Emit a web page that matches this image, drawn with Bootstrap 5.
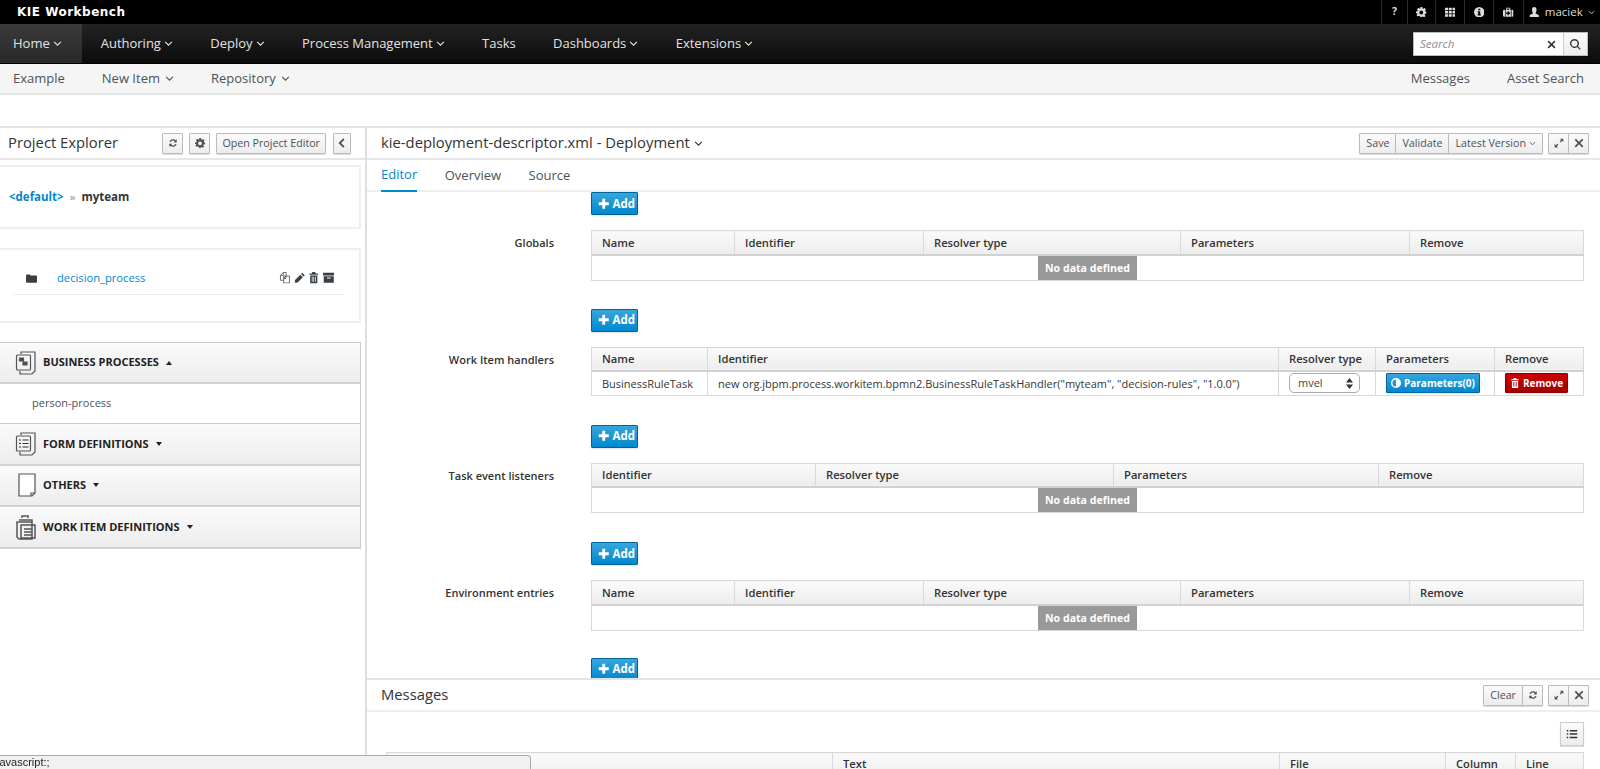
<!DOCTYPE html>
<html lang="en">
<head>
<meta charset="utf-8">
<title>KIE Workbench</title>
<link href="https://cdn.jsdelivr.net/npm/bootstrap@5.3.0/dist/css/bootstrap.min.css" rel="stylesheet">
<style>
html,body{height:769px;overflow:hidden}
body{font-family:"Open Sans","Noto Sans",sans-serif;font-size:12px;color:#363636;background:#fff}
svg.ic{width:1em;height:1em;fill:currentColor;flex:none;vertical-align:-.12em}
svg.ic.cv{font-size:9px}
svg.ic.cvs{font-size:7px}
.kie-top{height:24px;background:#000;color:#fff}
.kie-brand{font:700 12px "DejaVu Sans",sans-serif;padding-left:17px;letter-spacing:.5px}
.kie-util{height:24px;padding:0 8px;display:flex;align-items:center;justify-content:center;border-left:1px solid #2b2b2b;color:#ddd;font-size:10.500px}
.kie-user{font-size:11.500px;gap:5px}
.kie-user svg{font-size:10.500px}
.u26{width:26px}.u28{width:28px}.u29{width:29px}.u30{width:30px}.u77{width:77px}
.kie-main{height:40px;background:linear-gradient(#232323,#0c0c0c);border-bottom:1px solid #000;color:#ddd;font-size:13px}
.kie-main a{color:#e2e2e2;text-decoration:none;height:39px;display:flex;align-items:center;gap:3px;padding:0 18.700px}
.kie-main a.here{background:linear-gradient(#3a3a3a,#2a2a2a);padding:0 13px;width:82px}
.kie-search{width:175px;height:24px;background:#fff;border:1px solid #bbb;margin-right:12px;box-shadow:0 1px 1px rgba(0,0,0,.4);color:#333}
.kie-search em{color:#8b8d8f;font-size:11.500px;flex:1;padding-left:6px}
.kie-search b{width:24px;height:22px;display:flex;align-items:center;justify-content:center;font-size:9px}
.kie-search b+b{border-left:1px solid #ccc;background:linear-gradient(#fafafa,#ededed);font-size:11px}
.kie-sub{height:31px;background:#f5f5f5;border-bottom:2px solid #e3e3e3;font-size:13px;color:#4d5258;padding:0 16px 0 13px}
.kie-sub span{display:flex;align-items:center;gap:5px}
.kie-subgap{gap:37px}
.kie-gap{height:31px}
.kie-work{height:643px;border-top:2px solid #e3e3e3}
.kie-left{width:367px;flex:none;border-right:2px solid #dedede;height:100%}
.kie-right{flex:1;min-width:0;height:100%}
.kie-phead{height:32px;padding:0 14px 0 8px;border-bottom:2px solid #e7e7e7}
.kie-phead h2{font-size:14.800px;font-weight:400;margin:0;color:#333;white-space:nowrap}
.kie-rhead{padding:0 11px 0 14px}
.kie-hg6{gap:6px}.kie-hg5{gap:5px}
.kie-b{background:linear-gradient(#fafafa,#ededed);border:1px solid #bbb;border-radius:1px;color:#4d5258;font-size:10.700px;height:21px;padding:0 6px;display:inline-flex;align-items:center;gap:3px;box-shadow:0 1px 1px rgba(0,0,0,.15);line-height:1;white-space:nowrap}
.btn-group .kie-b+.kie-b{margin-left:-1px}
.kie-b.sq{width:21px;padding:0;justify-content:center;font-size:10px}
.kie-b.nar{width:18px}
.kie-b.me2{margin-right:1px;padding:0 5px}
.kie-box{width:361px;border:2px solid #eee;border-left:0}
.kie-crumb{height:64px;margin-top:5px;padding-left:9px;font-size:11.500px;font-weight:700;gap:6px}
.kie-crumb a,.kie-proj a{color:#0088ce;text-decoration:none}
.kie-crumb i{font-style:normal;font-weight:400;color:#8b8d8f}
.kie-proj{height:75px;margin-top:19px;padding:0 14px}
.kie-prow{height:45px;padding-top:12px;border-bottom:1px solid #eee;font-size:11.200px}
.kie-prow>svg{margin-left:12px;font-size:11px;color:#393f44}
.kie-prow a{margin-left:20px;flex:1}
.kie-tools{gap:3px;font-size:11.500px;color:#393f44;margin-right:11px}
.kie-acc{width:361px;margin-top:19px;border-top:1px solid #ccc}
.kie-ahead{height:41px;background:linear-gradient(#fafafa,#ededed);border-bottom:2px solid #d1d1d1;font-weight:700;font-size:11px;color:#222;padding-left:15px;gap:6px;border-right:1px solid #ccc}
.kie-acc>.kie-ahead+.kie-ahead,.kie-abody+.kie-ahead{height:41.500px}
.kie-ahead svg.doc{width:22px;height:26px;fill:none;stroke:#555;stroke-width:1.200;flex:none}
.kie-caret{width:0;height:0;border:3.500px solid transparent;border-top:4px solid #222;border-bottom:0;margin-left:1px}
.kie-caret.up{border-top:0;border-bottom:4px solid #222}
.kie-abody{height:40px;padding-left:32px;font-size:11px;color:#4d5258;border-bottom:1px solid #ccc;border-right:1px solid #ccc;display:flex;align-items:center}
.kie-tabs{height:32px;padding-left:14px;border-bottom:2px solid #eee;gap:27.500px;font-size:13px;color:#4d5258}
.kie-tabs span{display:flex;align-items:center;margin-bottom:-2px;height:32px}
.kie-tabs .on{color:#0088ce;border-bottom:2px solid #0088ce}
.kie-scroll{height:486px;overflow:hidden}
.kie-add{display:flex;margin-left:224px}
.kie-g27{margin-top:27px}.kie-g28{margin-top:28px}.kie-g29{margin-top:29px}
.kie-blue{background:linear-gradient(#39a5dc,#0088ce);border:1px solid #00659c;border-radius:1px;color:#fff;font-size:11.500px;font-weight:700;height:23px;padding:0 6px;display:inline-flex;align-items:center;gap:3px;box-shadow:0 1px 2px rgba(0,0,0,.12);white-space:nowrap}
.kie-blue.wide{width:47px}
.kie-blue.tiny{font-size:10px;height:20px;gap:3px;padding:0 4px}
.kie-blue.tiny svg{font-size:10px}
.kie-red{background:linear-gradient(#c00,#a30000);border-color:#8b0000}
.kie-row{display:flex;align-items:flex-start;margin:15px 0 0}
.kie-label{width:187px;flex:none;text-align:right;font-size:11px;font-weight:600;color:#333;padding-top:5px;margin-right:37px}
.kie-tb{width:992px;table-layout:fixed;margin:0;border:1px solid #d1d1d1;font-size:11px;color:#363636}
.kie-tb th{height:24px;padding:0 10px;background:linear-gradient(#fafafa,#ededed);border:1px solid #d9d9d9;border-bottom:2px solid #d1d1d1;font-size:11.200px;font-weight:600;color:#333;white-space:nowrap;vertical-align:middle;line-height:15px}
.kie-tb td{height:24px;padding:0 10px;border:1px solid #d9d9d9;vertical-align:middle;white-space:nowrap;box-shadow:none;background:#fff;line-height:15px}
.kie-tb td.kie-none{padding:0;text-align:center}
.kie-nodata{display:inline-block;background:#999;color:#fff;font-weight:700;font-size:10.600px;width:99px;line-height:24px;vertical-align:top}
.kie-sel{position:relative;width:71px;height:20px;border:1px solid #aaa;border-radius:5px;background:#fff;padding-left:8px;line-height:18px;color:#444}
.kie-sel svg{position:absolute;right:6px;top:4px;width:7px;height:11px;fill:#333}
.kie-msg{border-top:2px solid #e3e3e3}
.kie-mhead{height:32px;border-bottom:2px solid #eee}
.kie-mbody{padding:10px 16px 0 19px;height:70px;overflow:hidden}
.kie-list{width:24px;height:24px;background:linear-gradient(#fafafa,#ededed);border:1px solid #ccc;color:#333;font-size:12px;box-shadow:0 1px 1px rgba(0,0,0,.12);margin-left:auto;display:flex;align-items:center;justify-content:center}
.kie-mtb{width:1197px;table-layout:fixed;margin:6px 0 0;font-size:11.200px}
.kie-mtb th{height:25px;padding:3px 10px 0;background:linear-gradient(#fafafa,#ededed);border:1px solid #d9d9d9;font-weight:600;color:#333;vertical-align:top;line-height:15px}
.kie-status{position:fixed;left:0;bottom:0;width:531px;height:14px;background:#f1f1f1;border-top:1px solid #aaa;border-right:1px solid #aaa;border-top-right-radius:4px;font:11px/13px "Liberation Sans",sans-serif;color:#222;text-indent:-3px;overflow:hidden}
</style>
</head>
<body>
<svg width="0" height="0" class="position-absolute">
<defs>
<symbol id="i-x" viewBox="0 0 16 16"><path d="M3 1 8 6l5-5 2 2-5 5 5 5-2 2-5-5-5 5-2-2 5-5-5-5z"/></symbol>
<symbol id="i-ref" viewBox="0 0 16 16"><path d="M2.300 6.500A6 6 0 0 1 12.400 3.700L14 2v5H9l1.900-1.900A4 4 0 0 0 4.400 6.500zM13.700 9.500A6 6 0 0 1 3.600 12.300L2 14V9h5l-1.900 1.900a4 4 0 0 0 6.500-1.400z"/></symbol>
<symbol id="i-cog" viewBox="0 0 16 16"><path fill-rule="evenodd" d="M6.500 0h3l.4 2.200 1.300.6L13.100 1.500l2.100 2.100-1.300 1.900.6 1.300L16 7v3l-2.200.4-.6 1.300 1.300 1.900-2.100 2.100-1.900-1.300-1.300.6L9.500 16h-3l-.4-2.200-1.300-.6-1.900 1.300-2.100-2.100 1.300-1.900-.6-1.300L0 10V7l2.200-.4.6-1.300L1.500 3.400l2.100-2.100 1.900 1.300 1.300-.6zM8 5.500a3 3 0 1 0 0 6 3 3 0 0 0 0-6z"/></symbol>
<symbol id="i-th" viewBox="0 0 16 16"><path d="M0 1h4.500v4H0zM5.700 1h4.600v4H5.700zM11.500 1H16v4h-4.500zM0 6h4.500v4H0zM5.700 6h4.600v4H5.700zM11.500 6H16v4h-4.500zM0 11h4.500v4H0zM5.700 11h4.600v4H5.700zM11.500 11H16v4h-4.500z"/></symbol>
<symbol id="i-info" viewBox="0 0 16 16"><path fill-rule="evenodd" d="M8 0a8 8 0 1 1 0 16A8 8 0 0 1 8 0zM6.500 2.500v2.500h3V2.500zM5.500 6.500v1.500h1v3h-1V13h5v-1.500h-1v-5z"/></symbol>
<symbol id="i-kit" viewBox="0 0 16 16"><path fill-rule="evenodd" d="M5 1h6v3h1v11H4V4h1zM6.300 2.300V4h3.400V2.300zM7 6.500V8.500H5v2h2v2h2v-2h2v-2H9v-2zM0 6a2 2 0 0 1 2-2h1v11H2a2 2 0 0 1-2-2zM13 4h1a2 2 0 0 1 2 2v7a2 2 0 0 1-2 2h-1z"/></symbol>
<symbol id="i-user" viewBox="0 0 16 16"><path d="M8 0c2.200 0 3.500 1.800 3.500 4S10.300 8.500 10 9.500c0 1 5 1.700 5 3.800V16H1v-2.700c0-2.100 5-2.800 5-3.800C5.700 8.500 4.500 6.200 4.500 4S5.800 0 8 0z"/></symbol>
<symbol id="i-search" viewBox="0 0 16 16"><path fill-rule="evenodd" d="M6.500 0a6.500 6.500 0 0 1 5.200 10.400l4 4-1.400 1.400-4-4A6.500 6.500 0 1 1 6.500 0zm0 2a4.500 4.500 0 1 0 0 9 4.500 4.500 0 0 0 0-9z"/></symbol>
<symbol id="i-dn" viewBox="0 0 16 16"><path d="M2 5l6 6 6-6" fill="none" stroke="currentColor" stroke-width="2"/></symbol>
<symbol id="i-exp" viewBox="0 0 16 16"><path d="M9.500 1H15v5.500L13 4.500 10.500 7 9 5.500 11.500 3zM6.500 15H1V9.500l2 2L5.500 9 7 10.500 4.500 13z"/></symbol>
<symbol id="i-left" viewBox="0 0 16 16"><path d="M11 1.500 4.500 8l6.500 6.500" fill="none" stroke="currentColor" stroke-width="3"/></symbol>
<symbol id="i-files" viewBox="0 0 16 16"><path d="M10 5V.7H6L2 4.500v7h4.500M6 .7v4H2M6.500 5.500H14.500V15.300H6.500zM6.500 9l3.200-3.500V9z" fill="none" stroke="currentColor" stroke-width="1"/></symbol>
<symbol id="i-pen" viewBox="0 0 16 16"><path d="M11.500 1 15 4.500l-1.700 1.700-3.500-3.500zM8.800 3.700l3.500 3.500L5 14.500 1 15l.5-4z"/></symbol>
<symbol id="i-trash" viewBox="0 0 16 16"><path fill-rule="evenodd" d="M6 0h4l.7 2H14v1.700H2V2h3.300zM3 4.700h10V15l-1 1H4l-1-1zM5.300 6.500v7h1v-7zM7.500 6.500v7h1v-7zM9.700 6.500v7h1v-7z"/></symbol>
<symbol id="i-arch" viewBox="0 0 16 16"><path fill-rule="evenodd" d="M0 1h16v4H0zM1 6h14v9H1zM5.500 7.500V9h5V7.500z"/></symbol>
<symbol id="i-fold" viewBox="0 0 16 16"><path d="M0 3.500 1 2h4.500l1 1.500H15l1 1V13l-1 1H1l-1-1z"/></symbol>
<symbol id="i-plus" viewBox="0 0 16 16"><path d="M6 1h4v5h5v4h-5v5H6v-5H1V6h5z"/></symbol>
<symbol id="i-adj" viewBox="0 0 16 16"><path fill-rule="evenodd" d="M8 0a8 8 0 1 1 0 16A8 8 0 0 1 8 0zm0 2.300a5.700 5.700 0 0 0 0 11.400z"/></symbol>
<symbol id="i-list" viewBox="0 0 16 16"><path d="M1 2.500h2v2H1zM5 2.500h10v2H5zM1 7h2v2H1zM5 7h10v2H5zM1 11.500h2v2H1zM5 11.500h10v2H5z"/></symbol>
</defs>
</svg>

<header class="kie-top d-flex justify-content-between align-items-center">
  <div class="kie-brand">KIE Workbench</div>
  <div class="d-flex align-items-center">
    <span class="kie-util u26 fw-bold">?</span>
    <span class="kie-util u28"><svg class="ic"><use href="#i-cog"/></svg></span>
    <span class="kie-util u29"><svg class="ic"><use href="#i-th"/></svg></span>
    <span class="kie-util u29"><svg class="ic"><use href="#i-info"/></svg></span>
    <span class="kie-util u30"><svg class="ic"><use href="#i-kit"/></svg></span>
    <span class="kie-util kie-user u77"><svg class="ic"><use href="#i-user"/></svg><span>maciek</span><svg class="ic cvs"><use href="#i-dn"/></svg></span>
  </div>
</header>

<nav class="kie-main d-flex justify-content-between align-items-start">
  <div class="d-flex">
    <a class="here" href="#">Home <svg class="ic cv"><use href="#i-dn"/></svg></a>
    <a href="#">Authoring <svg class="ic cv"><use href="#i-dn"/></svg></a>
    <a href="#">Deploy <svg class="ic cv"><use href="#i-dn"/></svg></a>
    <a href="#">Process Management <svg class="ic cv"><use href="#i-dn"/></svg></a>
    <a href="#">Tasks</a>
    <a href="#">Dashboards <svg class="ic cv"><use href="#i-dn"/></svg></a>
    <a href="#">Extensions <svg class="ic cv"><use href="#i-dn"/></svg></a>
  </div>
  <div class="kie-search d-flex align-items-center mt-2">
    <em>Search</em>
    <b><svg class="ic"><use href="#i-x"/></svg></b>
    <b><svg class="ic"><use href="#i-search"/></svg></b>
  </div>
</nav>

<div class="kie-sub d-flex justify-content-between align-items-center">
  <div class="d-flex kie-subgap">
    <span>Example</span>
    <span>New Item <svg class="ic cv"><use href="#i-dn"/></svg></span>
    <span>Repository <svg class="ic cv"><use href="#i-dn"/></svg></span>
  </div>
  <div class="d-flex kie-subgap"><span>Messages</span><span>Asset Search</span></div>
</div>
<div class="kie-gap"></div>

<main class="kie-work d-flex">
  <aside class="kie-left">
    <div class="kie-phead d-flex align-items-center justify-content-between">
      <h2>Project Explorer</h2>
      <div class="d-flex kie-hg6">
        <span class="kie-b sq"><svg class="ic"><use href="#i-ref"/></svg></span>
        <span class="kie-b sq"><svg class="ic"><use href="#i-cog"/></svg></span>
        <span class="kie-b me2">Open Project Editor</span>
        <span class="kie-b sq nar"><svg class="ic"><use href="#i-left"/></svg></span>
      </div>
    </div>
    <div class="kie-box kie-crumb d-flex align-items-center">
      <a href="#">&lt;default&gt;</a><i>»</i><span>myteam</span>
    </div>
    <div class="kie-box kie-proj">
      <div class="kie-prow d-flex align-items-center">
        <svg class="ic"><use href="#i-fold"/></svg>
        <a href="#">decision_process</a>
        <div class="kie-tools d-flex">
          <svg class="ic"><use href="#i-files"/></svg><svg class="ic"><use href="#i-pen"/></svg><svg class="ic"><use href="#i-trash"/></svg><svg class="ic"><use href="#i-arch"/></svg>
        </div>
      </div>
    </div>
    <div class="kie-acc">
      <div class="kie-ahead d-flex align-items-center">
        <svg class="doc" viewBox="0 0 22 26"><path d="M5 21v3h12l3-3V2H6v2"/><rect x="1.500" y="5" width="14" height="15" rx="1"/><path d="M4.500 8l7 7M4.500 8h4v3h-4zM8 12h4v3H8z" fill="#333"/></svg>
        <span>BUSINESS PROCESSES</span><span class="kie-caret up"></span>
      </div>
      <div class="kie-abody">person-process</div>
      <div class="kie-ahead d-flex align-items-center">
        <svg class="doc" viewBox="0 0 22 26"><path d="M5 21v3h12l3-3V2H6v2"/><rect x="1.500" y="5" width="14" height="15" rx="1"/><path d="M4 9h2M4 12.500h2M4 16h2M7.500 9h6M7.500 12.500h6M7.500 16h6" stroke="#333"/></svg>
        <span>FORM DEFINITIONS</span><span class="kie-caret"></span>
      </div>
      <div class="kie-ahead d-flex align-items-center">
        <svg class="doc" viewBox="0 0 22 26"><path d="M4 2h16v19l-3 3H4z" fill="#fff"/><path d="M16 24v-3h4"/></svg>
        <span>OTHERS</span><span class="kie-caret"></span>
      </div>
      <div class="kie-ahead d-flex align-items-center">
        <svg class="doc" viewBox="0 0 22 26"><path d="M7 4V2h6v2M4 6h13v2M2 8h15v17H4l-2-2zM6 11h14v13H6zM9 15h8M9 18h8M9 21h8" fill="none" stroke-width="1.500"/></svg>
        <span>WORK ITEM DEFINITIONS</span><span class="kie-caret"></span>
      </div>
    </div>
  </aside>

  <section class="kie-right">
    <div class="kie-phead kie-rhead d-flex align-items-center justify-content-between">
      <h2 class="d-flex align-items-center gap-1">kie-deployment-descriptor.xml - Deployment <svg class="ic cv"><use href="#i-dn"/></svg></h2>
      <div class="d-flex kie-hg5">
        <div class="btn-group">
          <span class="kie-b">Save</span><span class="kie-b">Validate</span><span class="kie-b">Latest Version <svg class="ic cvs"><use href="#i-dn"/></svg></span>
        </div>
        <div class="btn-group">
          <span class="kie-b sq"><svg class="ic"><use href="#i-exp"/></svg></span><span class="kie-b sq"><svg class="ic"><use href="#i-x"/></svg></span>
        </div>
      </div>
    </div>
    <div class="kie-tabs d-flex">
      <span class="on">Editor</span><span>Overview</span><span>Source</span>
    </div>
    <div class="kie-scroll">
      <div class="kie-add"><span class="kie-blue wide"><svg class="ic"><use href="#i-plus"/></svg>Add</span></div>

      <div class="kie-row">
        <div class="kie-label">Globals</div>
        <table class="table kie-tb">
          <colgroup><col width="143"><col width="189"><col width="257"><col width="229"><col width="174"></colgroup>
          <thead><tr><th>Name</th><th>Identifier</th><th>Resolver type</th><th>Parameters</th><th>Remove</th></tr></thead>
          <tbody><tr><td colspan="5" class="kie-none"><span class="kie-nodata">No data defined</span></td></tr></tbody>
        </table>
      </div>
      <div class="kie-add kie-g28"><span class="kie-blue wide"><svg class="ic"><use href="#i-plus"/></svg>Add</span></div>

      <div class="kie-row">
        <div class="kie-label">Work Item handlers</div>
        <table class="table kie-tb">
          <colgroup><col width="116"><col width="571"><col width="97"><col width="119"><col width="89"></colgroup>
          <thead><tr><th>Name</th><th>Identifier</th><th>Resolver type</th><th>Parameters</th><th>Remove</th></tr></thead>
          <tbody><tr>
            <td>BusinessRuleTask</td>
            <td>new org.jbpm.process.workitem.bpmn2.BusinessRuleTaskHandler("myteam", "decision-rules", "1.0.0")</td>
            <td><div class="kie-sel">mvel<svg viewBox="0 0 7 11"><path d="M3.500 0 7 4.500H0zM3.500 11 0 6.500h7z"/></svg></div></td>
            <td><span class="kie-blue tiny"><svg class="ic"><use href="#i-adj"/></svg>Parameters(0)</span></td>
            <td><span class="kie-blue tiny kie-red"><svg class="ic"><use href="#i-trash"/></svg>Remove</span></td>
          </tr></tbody>
        </table>
      </div>
      <div class="kie-add kie-g29"><span class="kie-blue wide"><svg class="ic"><use href="#i-plus"/></svg>Add</span></div>

      <div class="kie-row">
        <div class="kie-label">Task event listeners</div>
        <table class="table kie-tb">
          <colgroup><col width="224"><col width="298"><col width="265"><col width="205"></colgroup>
          <thead><tr><th>Identifier</th><th>Resolver type</th><th>Parameters</th><th>Remove</th></tr></thead>
          <tbody><tr><td colspan="4" class="kie-none"><span class="kie-nodata">No data defined</span></td></tr></tbody>
        </table>
      </div>
      <div class="kie-add kie-g29"><span class="kie-blue wide"><svg class="ic"><use href="#i-plus"/></svg>Add</span></div>

      <div class="kie-row">
        <div class="kie-label">Environment entries</div>
        <table class="table kie-tb">
          <colgroup><col width="143"><col width="189"><col width="257"><col width="229"><col width="174"></colgroup>
          <thead><tr><th>Name</th><th>Identifier</th><th>Resolver type</th><th>Parameters</th><th>Remove</th></tr></thead>
          <tbody><tr><td colspan="5" class="kie-none"><span class="kie-nodata">No data defined</span></td></tr></tbody>
        </table>
      </div>
      <div class="kie-add kie-g27"><span class="kie-blue wide"><svg class="ic"><use href="#i-plus"/></svg>Add</span></div>
    </div>

    <div class="kie-msg">
      <div class="kie-phead kie-rhead kie-mhead d-flex align-items-center justify-content-between">
        <h2>Messages</h2>
        <div class="d-flex kie-hg5">
          <div class="btn-group">
            <span class="kie-b">Clear</span><span class="kie-b sq"><svg class="ic"><use href="#i-ref"/></svg></span>
          </div>
          <div class="btn-group">
            <span class="kie-b sq"><svg class="ic"><use href="#i-exp"/></svg></span><span class="kie-b sq"><svg class="ic"><use href="#i-x"/></svg></span>
          </div>
        </div>
      </div>
      <div class="kie-mbody">
        <div class="kie-list"><svg class="ic"><use href="#i-list"/></svg></div>
        <table class="table kie-mtb">
          <colgroup><col width="446"><col width="447"><col width="166"><col width="70"><col width="68"></colgroup>
          <thead><tr><th></th><th>Text</th><th>File</th><th>Column</th><th>Line</th></tr></thead>
        </table>
      </div>
    </div>
  </section>
</main>
<div class="kie-status">javascript:;</div>
<script src="https://cdn.jsdelivr.net/npm/bootstrap@5.3.0/dist/js/bootstrap.bundle.min.js"></script>
</body>
</html>
